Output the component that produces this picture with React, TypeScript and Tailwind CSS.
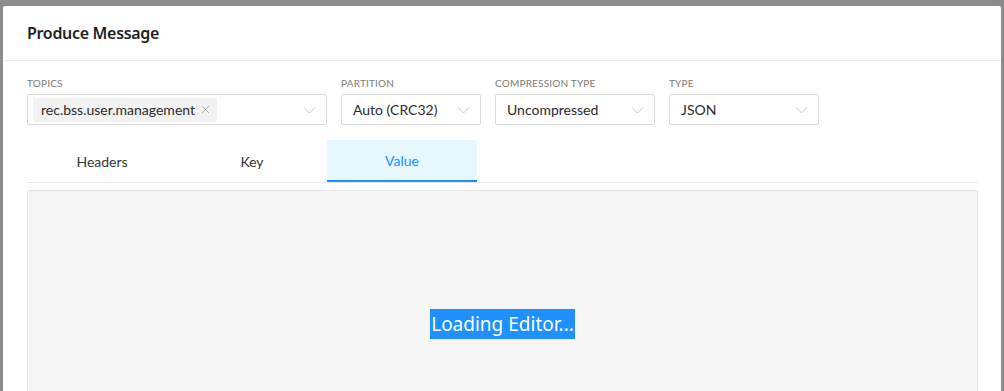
import { X } from 'lucide-react';

const font = { fontFamily: '"Noto Sans", "Open Sans", sans-serif' };
const body = 'font-[Lato,"Noto_Sans",sans-serif]';

function Chevron() {
    return (
        <svg
            width="13"
            height="8"
            viewBox="0 0 13 8"
            className="shrink-0 text-[#c9c9c9]"
            fill="none"
            stroke="currentColor"
            strokeWidth="1"
        >
            <polyline points="1,1.5 6.5,7 12,1.5" />
        </svg>
    );
}

function Field({
    label,
    width,
    children,
}: {
    label: string;
    width: string;
    children: React.ReactNode;
}) {
    return (
        <div className={`flex flex-col ${width}`}>
            <span className="text-[10px] leading-[12px] uppercase tracking-[0.02em] text-[#7a7a7a] mb-[5px]">
                {label}
            </span>
            <div className="h-[31px] border border-[#d9d9d9] rounded-[2px] bg-white flex items-center pl-[11px] pr-[10px]">
                <div className="flex-1 flex items-center min-w-0">{children}</div>
                <Chevron />
            </div>
        </div>
    );
}

export default function App() {
    const tabs = ['Headers', 'Key', 'Value'];
    return (
        <div
            className="w-[1004px] h-[391px] bg-[#8c8c8c] pt-[6px] pl-[3px] overflow-hidden"
            style={font}
        >
            <div className="w-[998px] h-[400px] bg-white rounded-tl-[2px] rounded-tr-[2px]">
                <div className="h-[55px] border-b border-[#ebebeb] flex items-center pl-[24px]">
                    <h1 className="text-[16px] font-semibold text-[#1f1f1f] tracking-[-0.02em]">
                        Produce Message
                    </h1>
                </div>
                <div className="pl-[24px] pr-[23px] pt-[16px]">
                    <div className={`flex gap-[14px] ${body}`}>
                        <Field label="Topics" width="w-[300px]">
                            <span className="-ml-[6px] h-[24px] bg-[#f2f2f2] rounded-[2px] flex items-center pl-[8px] pr-[5px] text-[14px] text-[#2b2b2b]">
                                rec.bss.user.management
                                <X
                                    className="ml-[4px] text-[#999]"
                                    size={13}
                                    strokeWidth={1.4}
                                />
                            </span>
                        </Field>
                        <Field label="Partition" width="w-[140px]">
                            <span className="text-[14px] text-[#2b2b2b]">
                                Auto (CRC32)
                            </span>
                        </Field>
                        <Field label="Compression Type" width="w-[160px]">
                            <span className="text-[14px] text-[#2b2b2b]">
                                Uncompressed
                            </span>
                        </Field>
                        <Field label="Type" width="w-[150px]">
                            <span className="text-[14px] text-[#2b2b2b]">
                                JSON
                            </span>
                        </Field>
                    </div>
                    <div className={`mt-[15px] flex border-b border-[#ebebeb] ${body}`}>
                        {tabs.map((t) => (
                            <div
                                key={t}
                                className={`w-[150px] h-[42px] flex items-center justify-center text-[14px] ${
                                    t === 'Value'
                                        ? 'bg-[#e6f7ff] text-[#1890ff] border-b-2 border-[#1890ff] -mb-px'
                                        : 'text-[#333]'
                                }`}
                            >
                                {t}
                            </div>
                        ))}
                    </div>
                    <div className="mt-[7px] h-[220px] bg-[#f6f6f6] border border-[#e3e3e3] rounded-[3px] flex justify-center pt-[118px]">
                        <span className="h-[30px] px-[1px] bg-[#1e90ff] text-white text-[19px] leading-[30px]">
                            Loading Editor...
                        </span>
                    </div>
                </div>
            </div>
        </div>
    );
}
